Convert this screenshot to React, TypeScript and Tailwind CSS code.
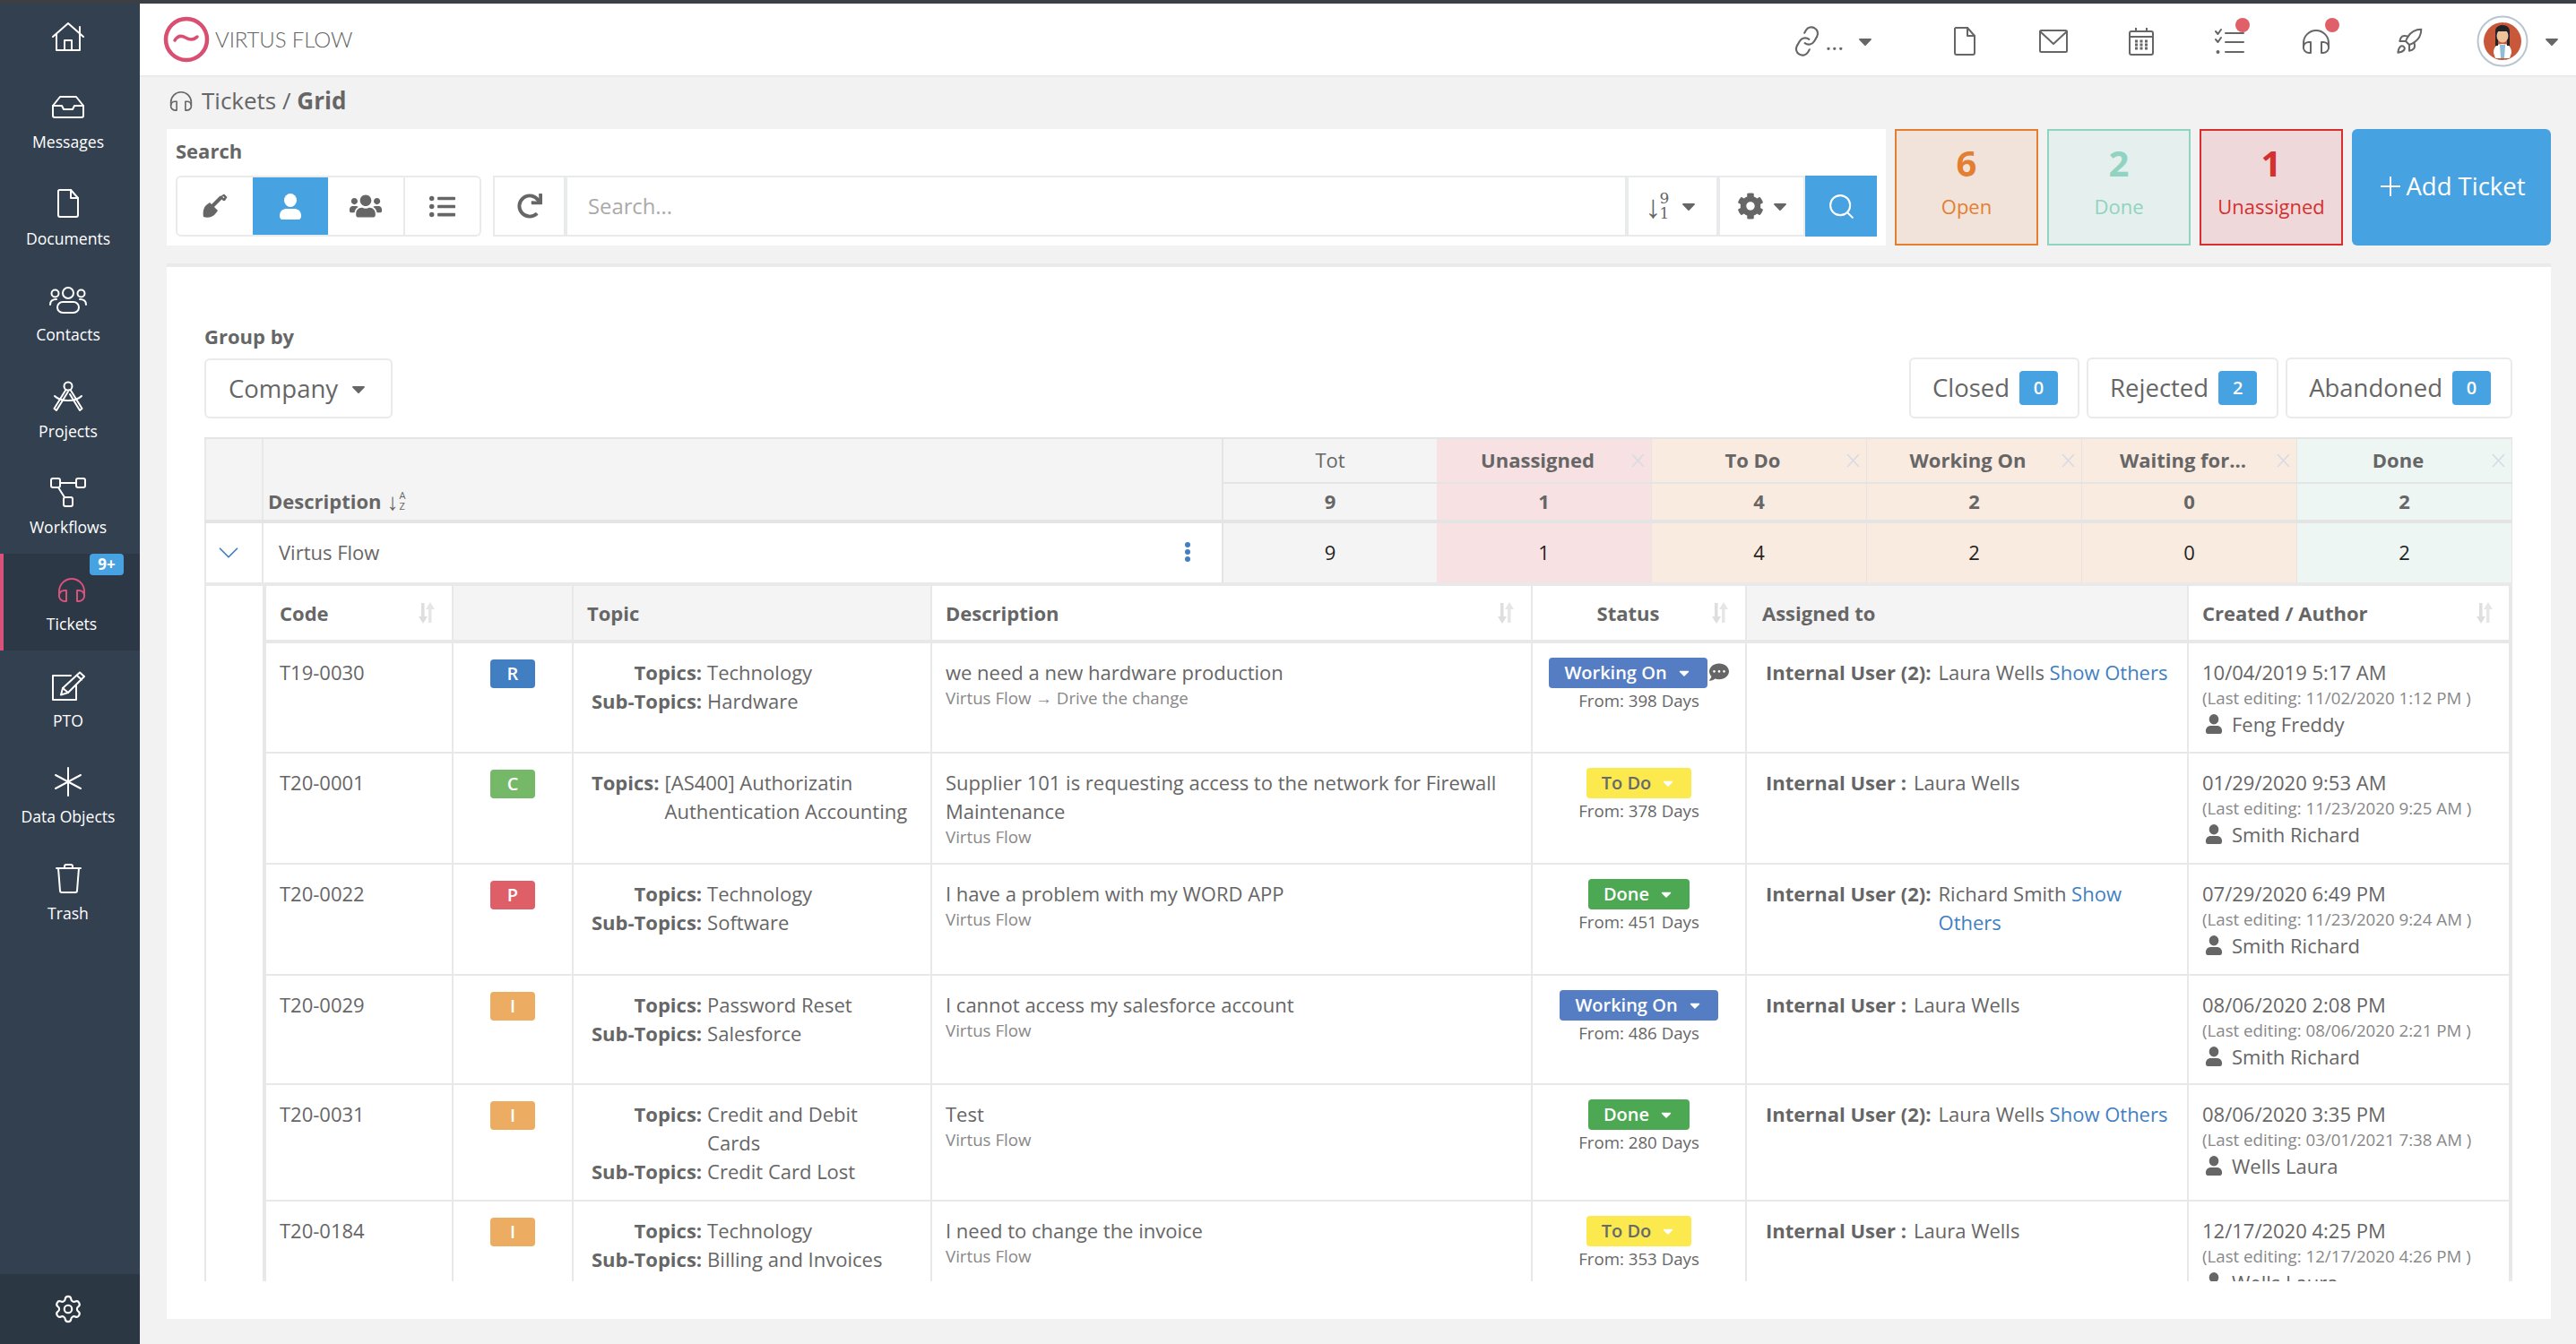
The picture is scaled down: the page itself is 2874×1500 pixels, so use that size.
import React from "react";
import { FaCaretDown, FaCog, FaCommentDots, FaListUl, FaRedo, FaUsers } from "react-icons/fa";
import { ChevronDown, Link as LinkIcon, Rocket, Search, Settings } from "lucide-react";

type Row = {
  code: string;
  kind: string;
  kindColor: string;
  topics: string;
  subTopics?: string;
  description: string;
  company: string;
  status: "Working On" | "To Do" | "Done";
  days: number;
  comment?: boolean;
  assignee: string;
  others?: boolean;
  created: string;
  edited: string;
  author: string;
  height: string;
};

const rows: Row[] = [
  {
    code: "T19-0030",
    kind: "R",
    kindColor: "bg-[#417fc2]",
    topics: "Technology",
    subTopics: "Hardware",
    description: "we need a new hardware production",
    company: "Virtus Flow → Drive the change",
    status: "Working On",
    days: 398,
    comment: true,
    assignee: "Laura Wells",
    others: true,
    created: "10/04/2019 5:17 AM",
    edited: "11/02/2020 1:12 PM",
    author: "Feng Freddy",
    height: "h-[124px]",
  },
  {
    code: "T20-0001",
    kind: "C",
    kindColor: "bg-[#74b868]",
    topics: "[AS400] Authorizatin Authentication Accounting",
    description: "Supplier 101 is requesting access to the network for Firewall Maintenance",
    company: "Virtus Flow",
    status: "To Do",
    days: 378,
    assignee: "Laura Wells",
    created: "01/29/2020 9:53 AM",
    edited: "11/23/2020 9:25 AM",
    author: "Smith Richard",
    height: "h-[124px]",
  },
  {
    code: "T20-0022",
    kind: "P",
    kindColor: "bg-[#de5f68]",
    topics: "Technology",
    subTopics: "Software",
    description: "I have a problem with my WORD APP",
    company: "Virtus Flow",
    status: "Done",
    days: 451,
    assignee: "Richard Smith",
    others: true,
    created: "07/29/2020 6:49 PM",
    edited: "11/23/2020 9:24 AM",
    author: "Smith Richard",
    height: "h-[124px]",
  },
  {
    code: "T20-0029",
    kind: "I",
    kindColor: "bg-[#ecac62]",
    topics: "Password Reset",
    subTopics: "Salesforce",
    description: "I cannot access my salesforce account",
    company: "Virtus Flow",
    status: "Working On",
    days: 486,
    assignee: "Laura Wells",
    created: "08/06/2020 2:08 PM",
    edited: "08/06/2020 2:21 PM",
    author: "Smith Richard",
    height: "h-[122px]",
  },
  {
    code: "T20-0031",
    kind: "I",
    kindColor: "bg-[#ecac62]",
    topics: "Credit and Debit Cards",
    subTopics: "Credit Card Lost",
    description: "Test",
    company: "Virtus Flow",
    status: "Done",
    days: 280,
    assignee: "Laura Wells",
    others: true,
    created: "08/06/2020 3:35 PM",
    edited: "03/01/2021 7:38 AM",
    author: "Wells Laura",
    height: "h-[130px]",
  },
  {
    code: "T20-0184",
    kind: "I",
    kindColor: "bg-[#ecac62]",
    topics: "Technology",
    subTopics: "Billing and Invoices",
    description: "I need to change the invoice",
    company: "Virtus Flow",
    status: "To Do",
    days: 353,
    assignee: "Laura Wells",
    created: "12/17/2020 4:25 PM",
    edited: "12/17/2020 4:26 PM",
    author: "Wells Laura",
    height: "h-[124px]",
  },
];

const statusStyle = {
  "Working On": "bg-[#547dc4] text-white",
  "To Do": "bg-[#fbe94e] text-[#676a6c]",
  Done: "bg-[#4ca853] text-white",
};

const line = { fill: "none", stroke: "currentColor", strokeWidth: 2, strokeLinecap: "round", strokeLinejoin: "round" } as const;

function HomeIcon() {
  return (
    <svg width="36" height="32" viewBox="0 0 36 32" {...line}>
      <path d="M1 16 18 1l17 15" />
      <path d="M31 12V5M5 13v18h26V13" />
      <path d="M14 31V20h8v11" />
    </svg>
  );
}

function InboxIcon() {
  return (
    <svg width="36" height="25" viewBox="0 0 36 25" {...line}>
      <path d="M9 1h18l8 10v11a2 2 0 0 1-2 2H3a2 2 0 0 1-2-2V11Z" />
      <path d="M1 11h10l2 4h10l2-4h10" />
    </svg>
  );
}

function DocIcon({ w = 24, h = 32 }: { w?: number; h?: number }) {
  return (
    <svg width={w} height={h} viewBox="0 0 24 32" {...line}>
      <path d="M2 1h13l8 9v19a2 2 0 0 1-2 2H3a2 2 0 0 1-2-2V2Z" />
      <path d="M15 1v9h8" />
    </svg>
  );
}

function ContactsIcon() {
  return (
    <svg width="42" height="30" viewBox="0 0 42 30" {...line}>
      <circle cx="21" cy="7" r="6" />
      <circle cx="6.5" cy="7.5" r="4" />
      <circle cx="35.5" cy="7.5" r="4" />
      <rect x="9" y="17" width="24" height="12" rx="6" />
      <path d="M1 20c0-4 3-6 7-6M41 20c0-4-3-6-7-6" />
    </svg>
  );
}

function ProjectsIcon() {
  return (
    <svg width="34" height="34" viewBox="0 0 34 34" {...line}>
      <circle cx="17" cy="6" r="4.5" />
      <path d="M14.5 10 1.5 31l2.500 2 13-21M19.5 10l13 21-2.500 2-11-18" />
      <path d="M2 17c4 4 9 5 15 5s11-1 15-5" />
    </svg>
  );
}

function WorkflowIcon() {
  return (
    <svg width="40" height="33" viewBox="0 0 40 33" {...line}>
      <rect x="1" y="1" width="10" height="10" rx="2" />
      <rect x="29" y="1" width="10" height="10" rx="2" />
      <rect x="15" y="22" width="10" height="10" rx="2" />
      <path d="M11 6h18M9 11l7 11" />
    </svg>
  );
}

function HeadsetIcon({ w = 32, h = 28, width = 2 }: { w?: number; h?: number; width?: number }) {
  return (
    <svg width={w} height={h} viewBox="0 0 32 28" {...line} strokeWidth={width}>
      <path d="M2 20v-4a14 14 0 0 1 28 0v4" />
      <path d="M2 20a6 6 0 0 1 6-5h2v12H8a6 6 0 0 1-6-7ZM30 20a6 6 0 0 0-6-5h-2v12h2a6 6 0 0 0 6-7Z" />
    </svg>
  );
}

function EditIcon() {
  return (
    <svg width="37" height="33" viewBox="0 0 37 33" {...line}>
      <path d="M21 5H1v27h26V15" />
      <path d="M31 1.500 36 6 18 24l-8 2.500L12 19Z" />
      <path d="m28 5 5 4.500M12 19l6 5" />
    </svg>
  );
}

function AsteriskIcon() {
  return (
    <svg width="30" height="33" viewBox="0 0 30 33" {...line}>
      <path d="M15 1v31M1 9l28 15M29 9 1 24" />
    </svg>
  );
}

function TrashIcon() {
  return (
    <svg width="29" height="33" viewBox="0 0 29 33" {...line}>
      <path d="M1 5h27M3 5l2 25a2 2 0 0 0 2 2h15a2 2 0 0 0 2-2l2-25" />
      <path d="M10 5V3a2 2 0 0 1 2-2h5a2 2 0 0 1 2 2v2" />
    </svg>
  );
}

function ShovelIcon() {
  return (
    <svg width="28" height="28" viewBox="0 0 28 28" fill="currentColor">
      <path d="M1 26c-1-5 0-10 3-13l4-3 9 9-3 4c-3 3-8 5-13 3Z" />
      <path d="M11 14 21 4" stroke="currentColor" strokeWidth="4" />
      <path d="M20 3l4-2.500 3.500 3.500L25 8l-2 0-3-3Zm3 0-.8.800 1.500 1.500.8-.8Z" fillRule="evenodd" />
    </svg>
  );
}

function UserIcon({ w, h }: { w: number; h: number }) {
  return (
    <svg width={w} height={h} viewBox="0 0 26 29" fill="currentColor">
      <ellipse cx="13" cy="7.500" rx="7" ry="7.500" />
      <path d="M1 25c0-6 4-8 8-8h8c4 0 8 2 8 8 0 2-1 4-3 4H4c-2 0-3-2-3-4Z" />
    </svg>
  );
}

function MailIcon() {
  return (
    <svg width="32" height="26" viewBox="0 0 32 26" {...line}>
      <rect x="1" y="1" width="30" height="24" rx="1.500" />
      <path d="m1 2 15 14L31 2" />
    </svg>
  );
}

function CalendarIcon() {
  return (
    <svg width="28" height="32" viewBox="0 0 28 32" fill="none" stroke="currentColor" strokeWidth="2">
      <rect x="1" y="5" width="26" height="26" rx="2" />
      <path d="M1 11h26M8 1v4M20 1v4" />
      <path d="M7 16h3M12.500 16h3M18 16h3M7 20h3M12.500 20h3M18 20h3M7 24h3M12.500 24h3M18 24h3" strokeWidth="3" />
    </svg>
  );
}

function TasksIcon() {
  return (
    <svg width="33" height="28" viewBox="0 0 33 28" {...line}>
      <path d="m1 3 2.500 3L7 1M1 12l2.500 3L7 10" />
      <path d="M12 5h20M12 15h20M12 26h20" />
      <circle cx="3.500" cy="26" r="1" fill="currentColor" />
    </svg>
  );
}

function LogoIcon() {
  return (
    <svg width="52" height="52" viewBox="0 0 52 52" fill="none" stroke="#d94f72">
      <circle cx="26" cy="26" r="23" strokeWidth="4.500" />
      <path d="M13 27c3-5 7-6 12-3s9 3 13-1" strokeWidth="3.500" strokeLinecap="round" />
    </svg>
  );
}

function Avatar() {
  return (
    <svg width="58" height="58" viewBox="0 0 58 58">
      <circle cx="29" cy="29" r="27.500" fill="#fff" stroke="#b9c6d0" strokeWidth="2" />
      <circle cx="29" cy="29" r="21" fill="#c9573a" />
      <path d="M19 42c0-7 4-10 10-10s10 3 10 10l-2 6H21Z" fill="#fff" />
      <path d="M26 33h6l-1 15h-4Z" fill="#8fbcd6" />
      <path d="M21 34V18c0-5 4-7 8-7s8 2 8 7v16h-3V18h-10v16Z" fill="#23242a" />
      <ellipse cx="29" cy="23" rx="6.500" ry="7.500" fill="#eec39a" />
      <path d="M22 18c1-4 4-5 7-5s6 1 7 5Z" fill="#23242a" />
    </svg>
  );
}

function SortIcon() {
  return (
    <svg width="23" height="24" viewBox="0 0 23 24" fill="#dedede" className="shrink-0">
      <path d="M6 1h3.500v15H13l-5 8-5-8h3Z" />
      <path d="M14 23h3.500V8H21l-5-8-5 8h3Z" fill="#e6e6e6" />
    </svg>
  );
}

function CloseIcon() {
  return (
    <svg width="15" height="16" viewBox="0 0 15 16" className="shrink-0" fill="none" stroke="#d9dce3" strokeWidth="1.800">
      <path d="M1 1l13 14M14 1 1 15" />
    </svg>
  );
}

const navItems = [
  { label: "Messages", icon: <InboxIcon /> },
  { label: "Documents", icon: <DocIcon /> },
  { label: "Contacts", icon: <ContactsIcon /> },
  { label: "Projects", icon: <ProjectsIcon /> },
  { label: "Workflows", icon: <WorkflowIcon /> },
  { label: "Tickets", icon: <HeadsetIcon />, active: true },
  { label: "PTO", icon: <EditIcon /> },
  { label: "Data Objects", icon: <AsteriskIcon /> },
  { label: "Trash", icon: <TrashIcon /> },
];

function Sidebar() {
  return (
    <aside className="w-[156px] shrink-0 bg-[#334050] text-white flex flex-col">
      <div className="h-[76px] flex justify-center pt-[21px] pr-[4px]">
        <HomeIcon />
      </div>
      {navItems.map((item) =>
        item.active ? (
          <div
            key={item.label}
            className="relative h-[107.6px] flex flex-col items-center bg-[#2d3846] border-l-4 border-[#d9527a]"
          >
            <span className="absolute top-0 left-[96px] h-[24px] w-[38px] rounded-[4px] bg-[#47a2e2] text-[17px] leading-[24px] font-bold text-center">
              9+
            </span>
            <div className="h-[58px] flex items-end text-[#d9527a] mt-[4px] pb-[8px]">{item.icon}</div>
            <div className="text-[17.6px] leading-[24px] mt-[4px]">{item.label}</div>
          </div>
        ) : (
          <div key={item.label} className="h-[107.6px] flex flex-col items-center pr-[4px]">
            <div className="h-[66px] flex items-center justify-center pt-[13px]">{item.icon}</div>
            <div className="text-[17.6px] leading-[24px]">{item.label}</div>
          </div>
        )
      )}
      <div className="mt-auto h-[78px] bg-[#2c3744] flex items-center justify-center pr-[4px]">
        <Settings size={34} strokeWidth={1.5} />
      </div>
    </aside>
  );
}

function Header() {
  return (
    <header className="h-[82px] shrink-0 bg-white border-b-2 border-[#e9eaec] flex items-center text-[#666] pl-[26px]">
      <LogoIcon />
      <span className="ml-[6px] font-['Lato',sans-serif] font-light text-[24px] tracking-[-0.1px] text-[#666]">VIRTUS FLOW</span>
      <div className="ml-auto flex items-center pt-[4px]">
        <LinkIcon size={34} strokeWidth={1.5} className="rotate-[-15deg]" />
        <span className="text-[26px] leading-[26px] ml-[4px]">...</span>
        <FaCaretDown size={24} className="ml-[12px] text-[#666]" />
        <div className="ml-[87px]">
          <DocIcon w={24} h={32} />
        </div>
        <div className="ml-[71px]">
          <MailIcon />
        </div>
        <div className="ml-[68px]">
          <CalendarIcon />
        </div>
        <div className="relative ml-[68px]">
          <TasksIcon />
          <span className="absolute -top-[12px] right-[-6px] w-[16px] h-[16px] rounded-full bg-[#e0606a]" />
        </div>
        <div className="relative ml-[64px]">
          <HeadsetIcon width={2} />
          <span className="absolute -top-[12px] right-[-10px] w-[16px] h-[16px] rounded-full bg-[#e0606a]" />
        </div>
        <Rocket size={32} strokeWidth={1.5} className="ml-[72px]" />
        <div className="ml-[59px]">
          <Avatar />
        </div>
        <FaCaretDown size={24} className="ml-[14px] mr-[15px]" />
      </div>
    </header>
  );
}

function Toolbar() {
  return (
    <div className="h-[130px] shrink-0 flex gap-[10px] ml-[30px] mr-[28px] text-[#666]">
      <div className="flex-1 bg-white pl-[10px] pr-[10px] pt-[8px]">
        <div className="text-[22px] leading-[32px] font-bold">Search</div>
        <div className="mt-[12px] flex h-[68px]">
          <div className="flex w-[341px] border-2 border-[#e9eaec] rounded-[6px] overflow-hidden">
            <div className="w-[84px] flex items-center justify-center">
              <ShovelIcon />
            </div>
            <div className="w-[84px] -my-[2px] flex items-center justify-center bg-[#47a2e2] text-white">
              <UserIcon w={26} h={29} />
            </div>
            <div className="w-[86px] flex items-center justify-center border-r-2 border-[#e9eaec]">
              <FaUsers size={36} />
            </div>
            <div className="flex-1 flex items-center justify-center">
              <FaListUl size={29} />
            </div>
          </div>
          <div className="ml-[13px] flex-1 flex border-2 border-[#e9eaec]">
            <div className="w-[81px] flex items-center justify-center border-r-4 border-[#e9eaec]">
              <FaRedo size={28} />
            </div>
            <div className="flex-1 flex items-center pl-[23px] pt-[2px] text-[23.8px] text-[#aaa]">Search...</div>
            <div className="w-[102px] flex items-center justify-center border-l-4 border-[#e9eaec] gap-[10px]">
              <span className="text-[36px] leading-[36px] font-light">↓</span>
              <span className="flex flex-col text-[17px] leading-[17px] font-['DejaVu_Serif',serif] -ml-[12px]">
                <span>9</span>
                <span>1</span>
              </span>
              <FaCaretDown size={24} />
            </div>
            <div className="w-[97px] flex items-center justify-center border-l-4 border-[#e9eaec] gap-[6px] pl-[4px]">
              <FaCog size={30} />
              <FaCaretDown size={24} />
            </div>
          </div>
          <div className="w-[80px] flex items-center justify-center bg-[#47a2e2] text-white">
            <Search size={33} strokeWidth={1.5} />
          </div>
        </div>
      </div>
      <StatCard value="6" label="Open" style="bg-[#f1e2da] border-[#e47e30] text-[#e47e30]" />
      <StatCard value="2" label="Done" style="bg-[#e5efed] border-[#8fd3c0] text-[#8fd3c0]" />
      <StatCard value="1" label="Unassigned" style="bg-[#eed8da] border-[#d5302e] text-[#d5302e]" />
      <div className="w-[222px] rounded-[6px] bg-[#47a2e2] text-white flex items-center justify-center gap-[6px] text-[27.5px] pb-[3px] pl-[4px]">
        <svg width="22" height="22" viewBox="0 0 22 22" stroke="currentColor" strokeWidth="2">
          <path d="M11 0v22M0 11h22" />
        </svg>
        Add Ticket
      </div>
    </div>
  );
}

function StatCard({ value, label, style }: { value: string; label: string; style: string }) {
  return (
    <div className={`w-[160px] border-2 flex flex-col items-center ${style}`}>
      <div className="text-[40px] leading-[50px] font-bold mt-[11px]">{value}</div>
      <div className="text-[22px] leading-[32px] mt-[7px]">{label}</div>
    </div>
  );
}

function GroupRow() {
  return (
    <div className="flex justify-between items-end text-[#666]">
      <div>
        <div className="text-[22px] leading-[32px] font-bold mb-[9px]">Group by</div>
        <div className="w-[210px] h-[67px] border-2 border-[#e9eaec] rounded-[6px] flex items-center pl-[25px] text-[27.5px] gap-[11px]">
          Company
          <FaCaretDown size={24} />
        </div>
      </div>
      <div className="flex gap-[8px]">
        <CountPill label="Closed" count={0} />
        <CountPill label="Rejected" count={2} />
        <CountPill label="Abandoned" count={0} />
      </div>
    </div>
  );
}

function CountPill({ label, count }: { label: string; count: number }) {
  return (
    <div className="h-[68px] border-2 border-[#e9eaec] rounded-[6px] flex items-center pl-[24px] pr-[22px] gap-[11px] text-[27.5px]">
      {label}
      <span className="w-[43px] h-[38px] rounded-[4px] bg-[#47a2e2] text-white text-[20px] font-semibold flex items-center justify-center">
        {count}
      </span>
    </div>
  );
}

const pivotCols = [
  { label: "Unassigned", bg: "bg-[#f7e1e2]", value: 1 },
  { label: "To Do", bg: "bg-[#faebe0]", value: 4 },
  { label: "Working On", bg: "bg-[#faebe0]", value: 2 },
  { label: "Waiting for...", bg: "bg-[#faebe0]", value: 0 },
  { label: "Done", bg: "bg-[#eef6f4]", value: 2 },
];

function PivotHead() {
  return (
    <div className="grid grid-cols-[66px_1fr_repeat(6,240px)] grid-rows-[50px_40px] border-t-2 border-b-4 border-[#e4e4e4] text-[#666] text-[22px]">
      <div className="row-span-2 bg-[#f4f4f4] border-l-2 border-r-2 border-[#e8e8e8]" />
      <div className="row-span-2 bg-[#f4f4f4] flex items-center self-stretch pt-[50px] pb-[2px] pl-[5px] font-bold gap-[6px]">
        Description
        <span className="text-[26px] font-normal leading-[26px]">↓</span>
        <span className="flex flex-col text-[11px] leading-[12px] -ml-[5px] font-normal">
          <span>A</span>
          <span>Z</span>
        </span>
      </div>
      <div className="bg-[#f4f4f4] border-l-2 border-b-2 border-[#e4e4e4] flex items-center justify-center pb-[2px]">Tot</div>
      {pivotCols.map((col) => (
        <div key={col.label} className={`${col.bg} border-b-2 border-r border-[#e4e4e4] flex items-center pl-[8px] pr-[7px] font-bold`}>
          <span className="flex-1 text-center whitespace-nowrap pb-[2px]">{col.label}</span>
          <CloseIcon />
        </div>
      ))}
      <div className="bg-[#f4f4f4] border-l-2 border-[#e4e4e4] flex items-center justify-center font-bold pb-[2px]">9</div>
      {pivotCols.map((col) => (
        <div key={col.label} className={`${col.bg} border-r border-[#e4e4e4] flex items-center justify-center font-bold pb-[2px]`}>
          {col.value}
        </div>
      ))}
    </div>
  );
}

function PivotRow() {
  return (
    <div className="grid grid-cols-[66px_1fr_repeat(6,240px)] h-[70px] border-b-4 border-[#e9e9e9] text-[22px]">
      <div className="border-l-2 border-r-2 border-[#e8e8e8] flex items-center justify-center pr-[12px] text-[#417fc2]">
        <ChevronDown size={38} strokeWidth={1.1} />
      </div>
      <div className="flex items-center pl-[17px] pr-[35px] pb-[2px] text-[#666]">
        <span className="flex-1">Virtus Flow</span>
        <span className="flex flex-col gap-[2px]">
          <span className="w-[6px] h-[6px] rounded-full bg-[#417fc2]" />
          <span className="w-[6px] h-[6px] rounded-full bg-[#417fc2]" />
          <span className="w-[6px] h-[6px] rounded-full bg-[#417fc2]" />
        </span>
      </div>
      <div className="bg-[#f4f4f4] border-l-2 border-[#e4e4e4] flex items-center justify-center pb-[2px] text-[#222]">9</div>
      {pivotCols.map((col) => (
        <div key={col.label} className={`${col.bg} border-r border-[#e9e4e0] flex items-center justify-center pb-[2px] text-[#222]`}>
          {col.value}
        </div>
      ))}
    </div>
  );
}

const th = "h-[62px] border-r-2 border-b-4 border-[#e8e8e8] text-[22px] font-bold text-left align-middle";

function TicketTable() {
  return (
    <table className="table-fixed w-full border-collapse text-[22px] text-[#666]">
      <colgroup>
        <col className="w-[208px]" />
        <col className="w-[134px]" />
        <col className="w-[400px]" />
        <col className="w-[670px]" />
        <col className="w-[239px]" />
        <col className="w-[493px]" />
        <col className="w-[360px]" />
      </colgroup>
      <thead>
        <tr>
          <th className={`${th} pl-[15px] pr-[17px]`}>
            <div className="flex items-center justify-between">
              Code
              <SortIcon />
            </div>
          </th>
          <th className={`${th} bg-[#f4f4f4]`} />
          <th className={`${th} bg-[#f4f4f4] pl-[15px]`}>Topic</th>
          <th className={`${th} pl-[15px] pr-[17px]`}>
            <div className="flex items-center justify-between">
              Description
              <SortIcon />
            </div>
          </th>
          <th className={`${th} pl-[16px] pr-[17px]`}>
            <div className="flex items-center">
              <span className="flex-1 text-center">Status</span>
              <SortIcon />
            </div>
          </th>
          <th className={`${th} bg-[#f4f4f4] pl-[17px]`}>Assigned to</th>
          <th className={`${th} pl-[15px] pr-[17px]`}>
            <div className="flex items-center justify-between">
              Created / Author
              <SortIcon />
            </div>
          </th>
        </tr>
      </thead>
      <tbody>
        {rows.map((row) => (
          <TicketRow key={row.code} row={row} />
        ))}
      </tbody>
    </table>
  );
}

const td = "align-top border-r-2 border-b-2 border-[#e8e8e8] pt-[16px]";

function TicketRow({ row }: { row: Row }) {
  return (
    <tr className={row.height}>
      <td className={`${td} pl-[15px] leading-[32px]`}>{row.code}</td>
      <td className={td}>
        <div className={`mx-auto mt-[2px] w-[50px] h-[32px] rounded-[4px] ${row.kindColor} text-white text-[20px] font-semibold flex items-center justify-center`}>
          {row.kind}
        </div>
      </td>
      <td className={`${td} pl-[20px] pr-[19px] leading-[32px]`}>
        <div className="grid grid-cols-[auto_1fr] gap-x-[6px]">
          <span className="font-bold text-right">Topics:</span>
          <span>{row.topics}</span>
          {row.subTopics && (
            <>
              <span className="font-bold text-right">Sub-Topics:</span>
              <span>{row.subTopics}</span>
            </>
          )}
        </div>
      </td>
      <td className={`${td} pl-[15px] pr-[17px] leading-[32px]`}>
        {row.description}
        <div className="text-[18.7px] leading-[26px] text-[#888]">{row.company}</div>
      </td>
      <td className={td}>
        <div className="flex justify-center items-start">
          <div className={`h-[34px] rounded-[4px] px-[17px] ${statusStyle[row.status]} text-[20px] font-semibold flex items-center gap-[10px] whitespace-nowrap`}>
            {row.status}
            <FaCaretDown size={18} className={row.status === "To Do" ? "text-white" : ""} />
          </div>
          {row.comment && <FaCommentDots size={22} className="mt-[5px] ml-[2px] text-[#666]" />}
        </div>
        <div className="text-[18.7px] leading-[28px] text-center">From: {row.days} Days</div>
      </td>
      <td className={`${td} pl-[21px] pr-[16px] leading-[32px]`}>
        <div className="grid grid-cols-[auto_1fr] gap-x-[8px]">
          <span className="font-bold whitespace-nowrap">Internal User {row.others ? "(2)" : ""}:</span>
          <span>
            {row.assignee}
            {row.others && <span className="text-[#417fc2]"> Show Others</span>}
          </span>
        </div>
      </td>
      <td className={`${td} pl-[15px] leading-[32px]`}>
        {row.created}
        <div className="text-[18.7px] leading-[26px] text-[#888]">(Last editing: {row.edited} )</div>
        <div className="flex items-center gap-[10px] pl-[3px]">
          <UserIcon w={20} h={22} />
          {row.author}
        </div>
      </td>
    </tr>
  );
}

export default function App() {
  return (
    <div className="w-[2874px] h-[1500px] overflow-hidden flex flex-col bg-[#f2f2f2] font-['Open_Sans',sans-serif]">
      <div className="h-[4px] shrink-0 bg-[#3c4045]" />
      <div className="flex-1 flex min-h-0">
        <Sidebar />
        <main className="flex-1 flex flex-col min-w-0">
          <Header />
          <div className="h-[58px] shrink-0 flex items-center pl-[33px] pb-[5px] gap-[10px] text-[26px] text-[#666]">
            <HeadsetIcon w={26} h={23} width={2} />
            <span>
              Tickets / <b>Grid</b>
            </span>
          </div>
          <Toolbar />
          <section className="mt-[20px] ml-[30px] mr-[28px] h-[1178px] shrink-0 bg-white border-t-4 border-[#e9eaec] pl-[42px] pr-[43px] pt-[61px] flex flex-col">
            <GroupRow />
            <div className="mt-[21px] flex flex-col">
              <PivotHead />
              <PivotRow />
              <div className="flex h-[776px] overflow-hidden">
                <div className="w-[69px] shrink-0 border-l-2 border-r-4 border-[#e8e8e8]" />
                <div className="flex-1 min-w-0 border-r-4 border-[#e8e8e8]">
                  <TicketTable />
                </div>
              </div>
            </div>
          </section>
        </main>
      </div>
    </div>
  );
}
